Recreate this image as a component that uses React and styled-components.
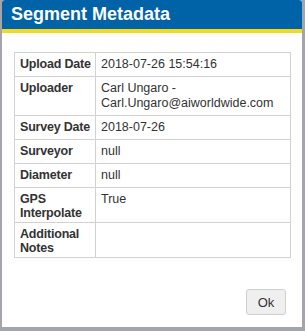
import React from "react";
import styled, { createGlobalStyle } from "styled-components";

const Global = createGlobalStyle`
  html, body { margin: 0; padding: 0; background: #a3a5ab; }
  body { width: 305px; height: 331px; overflow: hidden; font-family: "Liberation Sans", Arial, sans-serif; }
`;

const Page = styled.div`
  padding: 0 3px 4px 2px;
`;

const Dialog = styled.div`
  width: 300px;
  height: 327px;
  background: #fff;
  display: flex;
  flex-direction: column;
  border-radius: 3px 3px 0 0;
  overflow: hidden;
`;

const Header = styled.div`
  flex-shrink: 0;
  background: #0062a7;
  border-bottom: 4px solid #f8d81a;
  height: 29px;
  display: flex;
  align-items: center;
  padding-left: 9px;
  color: #fff;
  font-weight: bold;
  font-size: 18px;
`;

const Body = styled.div`
  flex: 1;
  padding: 19px 12px 0 12px;
`;

const Table = styled.table`
  width: 277px;
  table-layout: fixed;
  border-collapse: collapse;
  font-size: 12.5px;
  color: #333;
`;

const LabelCol = styled.col`
  width: 81px;
`;

const Cell = styled.td`
  border: 1px solid #d2d2d2;
  padding: ${(p) => (p.$label ? "4px 5px 2px" : "4px 5px")};
  line-height: ${(p) => (p.$label ? "14px" : "15px")};
  vertical-align: top;
  white-space: nowrap;
  font-weight: ${(p) => (p.$label ? "bold" : "normal")};
  letter-spacing: ${(p) => (p.$label ? "-0.2px" : "0")};
`;

const Footer = styled.div`
  flex-shrink: 0;
  display: flex;
  justify-content: flex-end;
  padding: 0 16px 12px 0;
`;

const Button = styled.button`
  font-family: "Liberation Sans", Arial, sans-serif;
  font-size: 13px;
  color: #333;
  background: #efefef;
  border: 1px solid #cfcfcf;
  border-radius: 3px;
  width: 40px;
  height: 26px;
  padding: 0;
`;

const rows = [
  ["Upload Date", "2018-07-26 15:54:16"],
  ["Uploader", "Carl Ungaro -\nCarl.Ungaro@aiworldwide.com"],
  ["Survey Date", "2018-07-26"],
  ["Surveyor", "null"],
  ["Diameter", "null"],
  ["GPS\nInterpolate", "True"],
  ["Additional\nNotes", ""],
];

const Lines = ({ text }) =>
  text.split("\n").map((t, i, a) => (
    <React.Fragment key={i}>
      {t}
      {i < a.length - 1 && <br />}
    </React.Fragment>
  ));

export default function App() {
  return (
    <>
      <Global />
      <Page>
        <Dialog>
          <Header>Segment Metadata</Header>
          <Body>
            <Table>
              <colgroup>
                <LabelCol />
                <col />
              </colgroup>
              <tbody>
                {rows.map(([k, v]) => (
                  <tr key={k}>
                    <Cell $label>
                      <Lines text={k} />
                    </Cell>
                    <Cell>
                      <Lines text={v} />
                    </Cell>
                  </tr>
                ))}
              </tbody>
            </Table>
          </Body>
          <Footer>
            <Button>Ok</Button>
          </Footer>
        </Dialog>
      </Page>
    </>
  );
}
